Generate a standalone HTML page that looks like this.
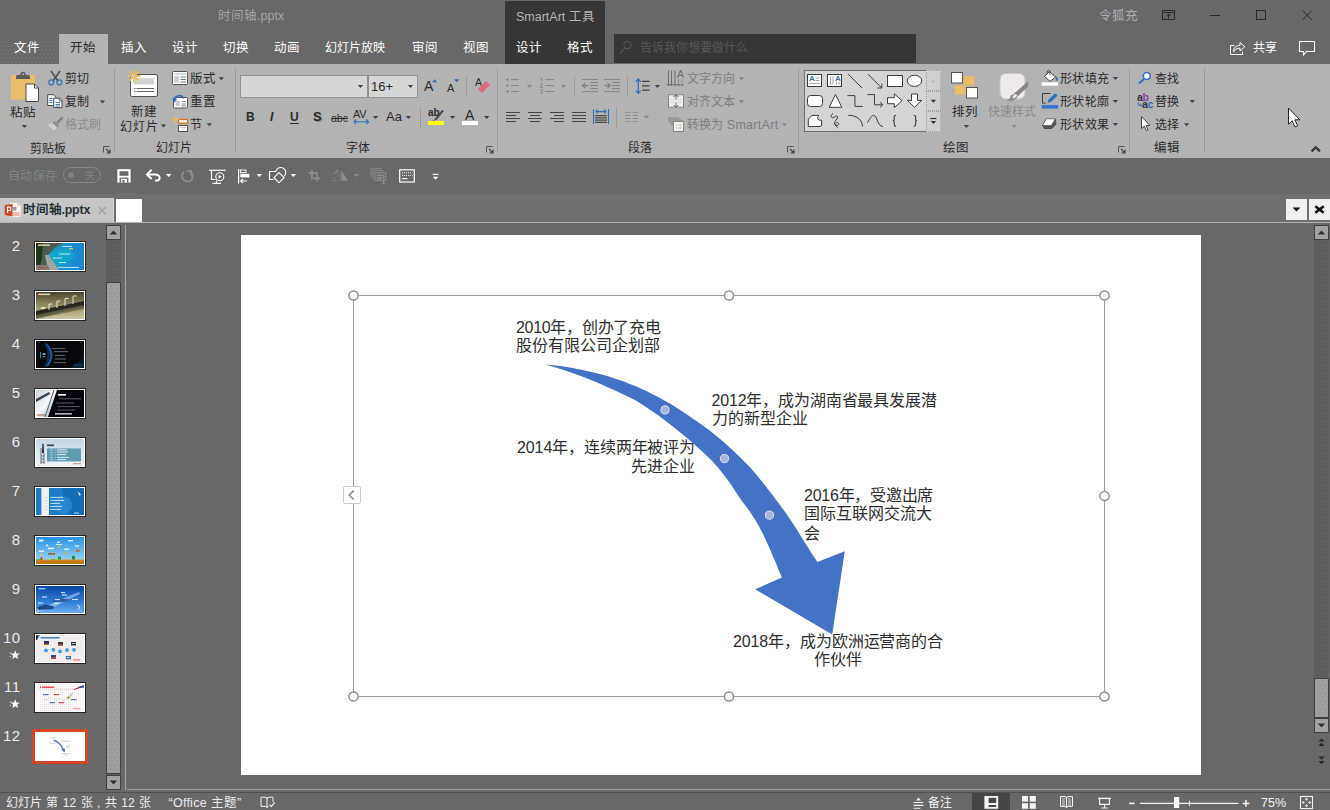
<!DOCTYPE html>
<html lang="zh-CN">
<head>
<meta charset="utf-8">
<title>时间轴.pptx</title>
<style>
*{box-sizing:border-box;margin:0;padding:0}
html,body{width:1330px;height:810px;overflow:hidden;background:#686868}
body{font-family:"Liberation Sans",sans-serif;font-size:12px;color:#fff;position:relative}
#app{position:absolute;left:0;top:0;width:1330px;height:810px;overflow:hidden;background:#686868}
.a{position:absolute}
.t{position:absolute;white-space:nowrap;line-height:16px;height:16px;font-size:12px}
.w{color:#fff}
.k{color:#2b2b2b}
.g{color:#8c8c8c}
svg.L{position:absolute;left:0;top:0;width:1330px;height:810px;overflow:hidden;pointer-events:none}
.st{position:absolute;white-space:nowrap;font-size:16px;line-height:19px;height:19px;color:#2e2e2e;text-align:justify;text-align-last:justify}
.sep{position:absolute;width:1px;background:#9c9c9c}
</style>
</head>
<body>
<div id="app">
<!-- ===== title bar + tab row ===== -->
<div class="a" id="titlebar" style="left:0;top:0;width:1330px;height:64px;background:#686868"></div>
<div class="t" style="width:66.11px;text-align:justify;text-align-last:justify;left:218px;top:8px;color:#a6a6a6;font-size:12.5px">时间轴.pptx</div>
<div class="a" id="ctxtab" style="left:505px;top:1px;width:100px;height:63px;background:#363636"></div>
<div class="t" style="width:78.80px;text-align:justify;text-align-last:justify;left:516px;top:9px;color:#b4b4b4;font-size:12.5px">SmartArt 工具</div>
<div class="t" style="width:39.00px;text-align:justify;text-align-last:justify;left:1099px;top:7.5px;color:#b0b0b0;font-size:12.5px">令狐充</div>
<div class="a" id="filetab" style="left:2px;top:42px;width:56px;height:22px;background-image:radial-gradient(circle,#7f7f7f 0.45px,transparent 0.85px),radial-gradient(circle,#7f7f7f 0.45px,transparent 0.85px);background-size:4px 8px;background-position:0 0,2px 4px"></div>
<div class="a" id="hometab" style="left:59px;top:34px;width:49px;height:30px;background:#b3b3b3"></div>
<div class="t w" style="width:26.00px;text-align:justify;text-align-last:justify;left:14px;top:40px;font-size:12.5px">文件</div>
<div class="t k" style="width:26.00px;text-align:justify;text-align-last:justify;left:70px;top:40px;font-size:12.5px">开始</div>
<div class="t w" style="width:26.00px;text-align:justify;text-align-last:justify;left:121px;top:40px;font-size:12.5px">插入</div>
<div class="t w" style="width:26.00px;text-align:justify;text-align-last:justify;left:172px;top:40px;font-size:12.5px">设计</div>
<div class="t w" style="width:26.00px;text-align:justify;text-align-last:justify;left:223px;top:40px;font-size:12.5px">切换</div>
<div class="t w" style="width:26.00px;text-align:justify;text-align-last:justify;left:274px;top:40px;font-size:12.5px">动画</div>
<div class="t w" style="width:60.00px;text-align:justify;text-align-last:justify;left:325px;top:40px">幻灯片放映</div>
<div class="t w" style="width:26.00px;text-align:justify;text-align-last:justify;left:412px;top:40px;font-size:12.5px">审阅</div>
<div class="t w" style="width:26.00px;text-align:justify;text-align-last:justify;left:463px;top:40px;font-size:12.5px">视图</div>
<div class="t w" style="width:26.00px;text-align:justify;text-align-last:justify;left:516px;top:40px;font-size:12.5px">设计</div>
<div class="t w" style="width:26.00px;text-align:justify;text-align-last:justify;left:567px;top:40px;font-size:12.5px">格式</div>
<div class="a" id="search" style="left:614px;top:34px;width:302px;height:29px;background:#363636"></div>
<div class="t" style="width:108.00px;text-align:justify;text-align-last:justify;left:640px;top:40px;color:#585858">告诉我你想要做什么</div>
<div class="t w" style="width:24.00px;text-align:justify;text-align-last:justify;left:1253px;top:40px">共享</div>
<svg class="L" viewBox="0 0 1330 810" fill="none">
 <!-- search magnifier -->
 <circle cx="627.5" cy="45" r="3.6" stroke="#4e5a4e" stroke-width="1.1"/>
 <path d="M625 48 L620 53.5" stroke="#4e5a4e" stroke-width="1.2"/>
 <!-- ribbon display options -->
 <rect x="1162.5" y="10.5" width="12" height="9" stroke="#2a2a2a" stroke-width="1"/>
 <path d="M1162.5 12.5 H1174.5" stroke="#2a2a2a" stroke-width="1"/>
 <path d="M1168.5 18.5 V14.2 M1166.3 16.2 L1168.5 14 L1170.7 16.2" stroke="#2a2a2a" stroke-width="1"/>
 <!-- min / max / close -->
 <path d="M1210 15.5 H1220" stroke="#2a2a2a" stroke-width="1"/>
 <rect x="1256.5" y="10.5" width="9" height="9" stroke="#2a2a2a" stroke-width="1"/>
 <path d="M1302.5 10.5 L1312 20 M1312 10.5 L1302.5 20" stroke="#2a2a2a" stroke-width="1"/>
 <!-- share -->
 <path d="M1234.5 45.5 H1230.5 V54.5 H1242.5 V51.5" stroke="#fff" stroke-width="1"/>
 <path d="M1233.5 52 C1233.5 47.5 1236 45.5 1240 45.5 V42.5 L1244.8 46.8 L1240 51 V48.2 C1237 48.2 1235 49 1233.5 52 Z" stroke="#fff" stroke-width="1" stroke-linejoin="round"/>
 <!-- comment -->
 <path d="M1299.5 41.5 H1314.5 V51.5 H1306.5 L1303.5 54.8 V51.5 H1299.5 Z" stroke="#fff" stroke-width="1.1" stroke-linejoin="miter"/>
</svg>
<!-- ===== ribbon background ===== -->
<div class="a" id="ribbon" style="left:0;top:64px;width:1330px;height:94px;background:#b3b3b3"></div>
<!-- group: clipboard -->
<div class="t k" style="width:26.00px;text-align:justify;text-align-last:justify;left:10px;top:104.5px;font-size:12.5px">粘贴</div>
<div class="t k" style="width:24.00px;text-align:justify;text-align-last:justify;left:65px;top:71px">剪切</div>
<div class="t k" style="width:24.00px;text-align:justify;text-align-last:justify;left:65px;top:94px">复制</div>
<div class="t g" style="width:36.00px;text-align:justify;text-align-last:justify;left:65px;top:117px">格式刷</div>
<div class="t k" style="width:36.00px;text-align:justify;text-align-last:justify;left:30px;top:140.5px">剪贴板</div>
<div class="sep" style="left:114px;top:68px;height:85px"></div>
<!-- group: slides -->
<div class="t k" style="width:26.00px;text-align:justify;text-align-last:justify;left:131px;top:104px;font-size:12.5px">新建</div>
<div class="t k" style="width:38.41px;text-align:justify;text-align-last:justify;left:120px;top:119px;letter-spacing:.8px">幻灯片</div>
<div class="t k" style="width:26.00px;text-align:justify;text-align-last:justify;left:190px;top:71px;font-size:12.5px">版式</div>
<div class="t k" style="width:26.00px;text-align:justify;text-align-last:justify;left:190px;top:94px;font-size:12.5px">重置</div>
<div class="t k" style="left:190px;top:117px">节</div>
<div class="t k" style="width:36.00px;text-align:justify;text-align-last:justify;left:156px;top:140px">幻灯片</div>
<div class="sep" style="left:235px;top:68px;height:85px"></div>
<svg class="L" viewBox="0 0 1330 810" fill="none">
 <!-- paste -->
 <rect x="11" y="75" width="24" height="24.5" fill="#e6be6c"/>
 <path d="M16 79 V76.5 Q16 75 17.5 75 H20.3 Q20.3 71.8 23 71.8 Q25.7 71.8 25.7 75 H28.5 Q30 75 30 76.5 V79 Z" fill="#5a5a5a"/>
 <circle cx="23" cy="74.3" r="1" fill="#b3b3b3"/>
 <path d="M26 84 H34.5 L38.5 88 V101.5 H26 Z" fill="#fff" stroke="#4a4a4a" stroke-width="1"/>
 <path d="M34.5 84 V88 H38.5" stroke="#4a4a4a" stroke-width="1"/>
 <path d="M21.8 125 H27.2 L24.5 128 Z" fill="#444"/>
 <!-- scissors -->
 <path d="M51 71 L58.2 81.2 M60 71 L52.8 81.2" stroke="#505050" stroke-width="1.5"/>
 <circle cx="51.3" cy="82.3" r="2.5" stroke="#2f6fb6" stroke-width="1.2"/>
 <circle cx="59.3" cy="82.3" r="2.5" stroke="#2f6fb6" stroke-width="1.2"/>
 <!-- copy -->
 <path d="M47.7 94.7 H53.5 L56 97.2 V105.5 H47.7 Z" fill="#fff" stroke="#4a4a4a" stroke-width="1"/>
 <path d="M49.5 98.5 H52.5 M49.5 100.5 H52.5 M49.5 102.5 H52.5" stroke="#2f6fb6" stroke-width="1"/>
 <path d="M53.7 98.2 H59.5 L62 100.7 V107.6 H53.7 Z" fill="#fff" stroke="#4a4a4a" stroke-width="1"/>
 <path d="M59.3 98.2 V101 H62" stroke="#4a4a4a" stroke-width="0.8"/>
 <path d="M55.5 102.5 H60 M55.5 104.5 H60 M55.5 106 H60" stroke="#2f6fb6" stroke-width="0.9"/>
 <path d="M99.8 100.5 H105.2 L102.5 103.5 Z" fill="#444"/>
 <!-- format painter (disabled) -->
 <path d="M62.5 117.5 L57 123" stroke="#858585" stroke-width="2.6"/>
 <path d="M54.5 121 L59.5 126 L57.5 128 L52.5 123 Z" fill="#8e8e8e"/>
 <path d="M52.5 123 L57.5 128 L54 130.5 L47.5 125 Z" fill="#d0d0d0"/>
 <!-- launcher -->
 <path d="M103.5 152.5 V146.5 H109.5" stroke="#555" stroke-width="1"/>
 <path d="M106 149 L109.5 152.5 M110 149.5 V153 H106.5" stroke="#444" stroke-width="1.2"/>
 <!-- new slide -->
 <rect x="130.5" y="74.5" width="27" height="22" rx="1.5" fill="#fff" stroke="#555" stroke-width="1"/>
 <rect x="134" y="78" width="20" height="6.5" fill="#d2d2d2"/>
 <path d="M136.5 88.5 H154 M136.5 91.5 H154 M134 88.5 H135.3 M134 91.5 H135.3" stroke="#666" stroke-width="1"/>
 <g stroke="#e8bf62" stroke-width="1.8"><path d="M134 69.6 V82.4 M127.6 76 H140.4 M129.5 71.5 L138.5 80.5 M138.5 71.5 L129.5 80.5"/></g>
 <circle cx="134" cy="76" r="1.6" fill="#c8c8c8"/>
 <path d="M160.8 124.5 H166.2 L163.5 127.5 Z" fill="#444"/>
 <!-- layout -->
 <rect x="172.5" y="71.5" width="15" height="13" rx="1" fill="#fff" stroke="#555" stroke-width="1"/>
 <path d="M174 74 H186" stroke="#ccc" stroke-width="1.4"/>
 <rect x="174.3" y="76" width="4.6" height="6.6" fill="#ccc"/>
 <path d="M180.5 77 H185.8 M180.5 79.5 H185.8 M180.5 82 H185.8" stroke="#666" stroke-width="0.9"/>
 <path d="M218.6 77.3 H224 L221.3 80.3 Z" fill="#444"/>
 <!-- reset -->
 <rect x="173.5" y="97.5" width="14" height="10.5" rx="1" fill="#fff" stroke="#555" stroke-width="1"/>
 <rect x="175.5" y="100.5" width="4.5" height="5.5" fill="#ccc"/>
 <path d="M181.5 101.5 H186 M181.5 104 H186 M181.5 106 H186" stroke="#777" stroke-width="0.9"/>
 <path d="M174.5 100.5 C174.5 95 182 94 183.5 98.5" stroke="#2f6fb6" stroke-width="1.6"/>
 <path d="M172 98.3 L177.2 98.8 L174.3 102.8 Z" fill="#2f6fb6"/>
 <!-- section -->
 <rect x="178.5" y="119.5" width="9" height="3.6" fill="#fff" stroke="#e0701c" stroke-width="1.2"/>
 <rect x="178.5" y="125.5" width="9" height="6" fill="#fff" stroke="#555" stroke-width="1"/>
 <path d="M180 127.5 H186" stroke="#ccc" stroke-width="1.2"/>
 <g stroke="#e8bf62" stroke-width="0.9"><path d="M175.5 116 V123 M172 119.5 H179 M173 117 L178 122 M178 117 L173 122"/></g>
 <path d="M206.7 123.3 H212.1 L209.4 126.3 Z" fill="#444"/>
</svg>
<!-- group: font -->
<div class="a" style="left:240px;top:75px;width:128px;height:23px;background:#d6d6d6;border:1px solid #8a958a"></div>
<div class="a" style="left:368px;top:75px;width:50px;height:23px;background:#d6d6d6;border:1px solid #8a958a"></div>
<div class="t k" style="left:371px;top:79px;font-size:13px">16+</div>
<div class="t k" style="left:424px;top:78px;font-size:14px">A</div>
<div class="t k" style="left:447px;top:80px;font-size:11px">A</div>
<div class="sep" style="left:466px;top:76px;height:21px"></div>
<div class="t k" style="left:475px;top:74px;font-size:10.5px">A</div>
<div class="t k" style="left:246px;top:109px;font-weight:bold">B</div>
<div class="t k" style="left:270px;top:109px;font-weight:bold;font-style:italic">I</div>
<div class="t k" style="left:290px;top:109px;font-weight:bold;text-decoration:underline;text-underline-offset:1.5px">U</div>
<div class="t" style="left:314px;top:110px;font-weight:bold;color:#8d8d8d;font-size:13px">S</div>
<div class="t k" style="left:313px;top:109px;font-weight:bold;font-size:13px">S</div>
<div class="t k" style="left:331px;top:110px;font-size:10.5px;text-decoration:line-through">abc</div>
<div class="t k" style="left:353px;top:106px;font-size:11px;letter-spacing:-.3px">AV</div>
<div class="t k" style="left:386px;top:109px;font-size:13px">Aa</div>
<div class="sep" style="left:420px;top:107px;height:21px"></div>
<div class="t k" style="left:428px;top:105px;font-size:10px;font-weight:bold">ab</div>
<div class="t k" style="left:465px;top:107px;font-size:14px">A</div>
<div class="t k" style="width:24.00px;text-align:justify;text-align-last:justify;left:346px;top:140px">字体</div>
<div class="sep" style="left:497px;top:68px;height:85px"></div>
<svg class="L" viewBox="0 0 1330 810" fill="none">
 <path d="M357.8 85 H363.2 L360.5 88 Z" fill="#444"/>
 <path d="M407.8 85 H413.2 L410.5 88 Z" fill="#444"/>
 <path d="M432 82.3 H437.4 L434.7 79.3 Z" fill="#2f6fb6"/>
 <path d="M454 79.3 H459.4 L456.7 82.3 Z" fill="#2f6fb6"/>
 <!-- eraser -->
 <path d="M478 89 L486 81 L490 85 L482 93 Z" fill="#da6b7e"/>
 <path d="M477.3 89.8 L481.2 93.8" stroke="#b3b3b3" stroke-width="1"/>
 <!-- AV arrow -->
 <path d="M354 121.8 H368.5" stroke="#2f6fb6" stroke-width="1.1"/>
 <path d="M356.3 119.5 L354 121.8 L356.3 124.1 M366.2 119.5 L368.5 121.8 L366.2 124.1" stroke="#2f6fb6" stroke-width="1.1"/>
 <path d="M372.8 116 H378.2 L375.5 119 Z" fill="#444"/>
 <path d="M405.7 116 H411.1 L408.4 119 Z" fill="#444"/>
 <!-- highlighter -->
 <rect x="428" y="121" width="16" height="4" fill="#ffff00"/>
 <path d="M443 110.5 L435.5 119.5" stroke="#4a4a4a" stroke-width="2"/>
 <path d="M436 118.5 L433 121" stroke="#4a4a4a" stroke-width="1"/>
 <path d="M449.8 116 H455.2 L452.5 119 Z" fill="#444"/>
 <!-- font color -->
 <rect x="462" y="121" width="16" height="4" fill="#fff"/>
 <path d="M484 116 H489.4 L486.7 119 Z" fill="#444"/>
 <!-- launcher -->
 <path d="M486.5 152.5 V146.5 H492.5" stroke="#555" stroke-width="1"/>
 <path d="M489 149 L492.5 152.5 M493 149.5 V153 H489.5" stroke="#444" stroke-width="1.2"/>
</svg>
<!-- group: paragraph -->
<div class="sep" style="left:574px;top:76px;height:21px"></div>
<div class="sep" style="left:627px;top:76px;height:21px"></div>
<div class="sep" style="left:616px;top:107px;height:21px"></div>
<div class="t g" style="width:48.00px;text-align:justify;text-align-last:justify;left:687px;top:71px;color:#7e7e7e">文字方向</div>
<div class="t g" style="width:48.00px;text-align:justify;text-align-last:justify;left:687px;top:94px;color:#7e7e7e">对齐文本</div>
<div class="t g" style="width:91.48px;text-align:justify;text-align-last:justify;left:687px;top:117px;color:#7e7e7e">转换为<span style="font-size:12.5px;letter-spacing:.3px"> SmartArt</span></div>
<div class="t g" style="left:677px;top:66px;color:#6c6c6c;font-size:10.5px">A</div>
<div class="t k" style="width:24.00px;text-align:justify;text-align-last:justify;left:628px;top:140px">段落</div>
<div class="sep" style="left:798px;top:68px;height:85px"></div>
<svg class="L" viewBox="0 0 1330 810" fill="none">
 <!-- bullets (disabled) -->
 <g fill="#838383"><circle cx="507.5" cy="79.6" r="1.2"/><circle cx="507.5" cy="85.6" r="1.2"/><circle cx="507.5" cy="91.5" r="1.2"/></g>
 <path d="M511 79.6 H519 M511 85.6 H519 M511 91.5 H519" stroke="#838383" stroke-width="1"/>
 <path d="M526.8 85 H532.2 L529.5 88 Z" fill="#8a8a8a"/>
 <!-- numbering (disabled) -->
 <path d="M545.2 79.6 H554 M545.2 85.6 H554 M545.2 91.5 H554" stroke="#838383" stroke-width="1"/>
 <g stroke="#838383" stroke-width="0.9"><path d="M540.6 78.6 L541.6 77.8 V81.6 M540.4 84 Q542.6 83 542.4 84.8 L540.4 87.4 H542.8 M540.4 89.8 H542.4 L541.3 91.2 Q543 91.6 542.4 93 Q541.6 93.8 540.2 93.2"/></g>
 <path d="M560.8 85 H566.2 L563.5 88 Z" fill="#8a8a8a"/>
 <!-- indent less / more (disabled) -->
 <g stroke="#838383" stroke-width="1"><path d="M582 79.4 H598 M590 82.5 H598 M590 85.6 H598 M590 88.6 H598 M582 91.7 H598"/><path d="M582.6 85.6 H588.6 M585.4 83 L582.6 85.6 L585.4 88.2" stroke-width="1.3"/></g>
 <g stroke="#838383" stroke-width="1"><path d="M604 79.4 H620 M612 82.5 H620 M612 85.6 H620 M612 88.6 H620 M604 91.7 H620"/><path d="M604.2 85.6 H610.2 M607.4 83 L610.2 85.6 L607.4 88.2" stroke-width="1.3"/></g>
 <!-- line spacing -->
 <path d="M638.3 79.2 V93.2 M635.8 81.8 L638.3 79 L640.8 81.8 M635.8 90.6 L638.3 93.4 L640.8 90.6" stroke="#2f6fb6" stroke-width="1.2"/>
 <path d="M642 81.4 H649.5 M642 85.8 H649.5 M642 90.2 H649.5" stroke="#3f3f3f" stroke-width="1.2"/>
 <path d="M654.7 85 H660.1 L657.4 88 Z" fill="#444"/>
 <!-- alignment -->
 <g stroke="#454545" stroke-width="1">
  <path d="M506 112.5 H520 M506 115.5 H516 M506 118.5 H520 M506 121.5 H516"/>
  <path d="M528 112.5 H542 M530 115.5 H540 M528 118.5 H542 M530 121.5 H540"/>
  <path d="M550 112.5 H564 M554 115.5 H564 M550 118.5 H564 M554 121.5 H564"/>
  <path d="M572 112.5 H586 M572 115.5 H586 M572 118.5 H586 M572 121.5 H586"/>
  <path d="M595 115.7 H607 M595 117.9 H607 M595 120.1 H607 M595 122.3 H607" stroke="#333"/>
 </g>
 <path d="M593.5 109 V124 M608.5 109 V124" stroke="#2f6fb6" stroke-width="1.1"/>
 <path d="M596 111.6 H606 M598 109.6 L596 111.6 L598 113.6 M604 109.6 L606 111.6 L604 113.6" stroke="#2f6fb6" stroke-width="1.1"/>
 <!-- columns (disabled) -->
 <path d="M625 112.5 H630.5 M632.5 112.5 H638 M625 115.5 H630.5 M632.5 115.5 H638 M625 118.5 H630.5 M632.5 118.5 H638 M625 121.5 H630.5 M632.5 121.5 H638" stroke="#8a918a" stroke-width="1"/>
 <path d="M643.7 115.8 H649.1 L646.4 118.8 Z" fill="#8a8a8a"/>
 <!-- text direction (disabled) -->
 <g stroke="#6e6e6e" stroke-width="1"><path d="M668.5 70.5 V85 M671.5 70.5 V85 M675 70.5 V85"/><path d="M678.5 79.5 V85 M682 79.5 V85" stroke-dasharray="1.2 1"/>
 <path d="M667.2 84 L668.5 86 L669.8 84 M670.2 84 L671.5 86 L672.8 84 M673.7 84 L675 86 L676.3 84 M677.2 84 L678.5 86 L679.8 84 M680.7 84 L682 86 L683.3 84" stroke-width="0.9"/></g>
 <path d="M738.8 77.3 H744.2 L741.5 80.3 Z" fill="#858585"/>
 <!-- align text (disabled) -->
 <rect x="668.5" y="94.7" width="15" height="12.6" fill="#f1ecec" stroke="#7e887e" stroke-width="1"/>
 <rect x="673.4" y="93.6" width="5.2" height="2.2" fill="#b3b3b3"/><rect x="673.4" y="106.2" width="5.2" height="2.2" fill="#b3b3b3"/>
 <path d="M676 94.6 V99.4 M673.6 97 L676 94.4 L678.4 97 M676 102.6 V107.4 M673.6 105 L676 107.6 L678.4 105" stroke="#747e74" stroke-width="1.1"/>
 <path d="M670.4 99.6 H681.6 M670.4 102.4 H681.6" stroke="#bdbdbd" stroke-width=".9" stroke-dasharray="1.2 1.2"/>
 <path d="M738.8 100.3 H744.2 L741.5 103.3 Z" fill="#808080"/>
 <!-- convert to smartart (disabled) -->
 <path d="M668 117 H678 L683 121 L680 125 H671 L668 121 Z" fill="#999"/>
 <rect x="673.5" y="121.5" width="10" height="10" fill="#f4f0f0" stroke="#7e887e" stroke-width="1"/>
 <path d="M676 125 H677.2 M678.6 125 H681.4 M676 128 H677.2 M678.6 128 H681.4" stroke="#aaa" stroke-width="1"/>
 <path d="M781.7 123.3 H787.1 L784.4 126.3 Z" fill="#858585"/>
 <!-- launcher -->
 <path d="M787.5 152.5 V146.5 H793.5" stroke="#555" stroke-width="1"/>
 <path d="M790 149 L793.5 152.5 M794 149.5 V153 H790.5" stroke="#444" stroke-width="1.2"/>
</svg>
<!-- group: drawing -->
<div class="a" style="left:804px;top:70px;width:137px;height:62px;background:#d0d0d0"></div>
<div class="a" style="left:804px;top:70px;width:123px;height:62px;background:#d4d4d4;border:1px solid #707070"></div>
<div class="a" style="left:926px;top:70px;width:15px;height:21px;background:#d0d0d0;border:1px dotted #98a498"></div>
<div class="a" style="left:926px;top:91px;width:15px;height:20px;background:#d0d0d0;border:1px dotted #98a498"></div>
<div class="a" style="left:926px;top:111px;width:15px;height:21px;background:#d0d0d0;border:1px dotted #98a498"></div>
<div class="t k" style="width:26.00px;text-align:justify;text-align-last:justify;left:952px;top:104px;font-size:12.5px">排列</div>
<div class="t g" style="width:48.00px;text-align:justify;text-align-last:justify;left:988px;top:104px;color:#8a8a8a">快速样式</div>
<div class="t k" style="width:49.61px;text-align:justify;text-align-last:justify;left:1060px;top:71px;letter-spacing:.4px">形状填充</div>
<div class="t k" style="width:49.61px;text-align:justify;text-align-last:justify;left:1060px;top:94px;letter-spacing:.4px">形状轮廓</div>
<div class="t k" style="width:49.61px;text-align:justify;text-align-last:justify;left:1060px;top:117px;letter-spacing:.4px">形状效果</div>
<div class="t k" style="width:26.00px;text-align:justify;text-align-last:justify;left:943px;top:140px;font-size:12.5px">绘图</div>
<div class="sep" style="left:1129px;top:68px;height:85px"></div>
<svg class="L" viewBox="0 0 1330 810" fill="none">
 <g stroke="#3c3c3c" stroke-width="1">
 <!-- row 1 -->
 <rect x="807.5" y="74.5" width="14" height="12" fill="#fff"/>
 <path d="M815.5 78 H819.5 M815.5 80.5 H819.5 M809.5 83.5 H819.5" stroke="#999" stroke-width="0.9"/>
 <rect x="827.5" y="74.5" width="14" height="12" fill="#fff"/>
 <path d="M830.5 76.5 V84.5 M833 76.5 V84.5 M836.5 82 V84.5 M839 82 V84.5" stroke="#999" stroke-width="0.9"/>
 <path d="M848.3 74.2 L862 88"/>
 <path d="M868 74.2 L881.6 87.8 M881.8 83.6 V88 H877.4"/>
 <rect x="887.5" y="75.5" width="15" height="11" fill="#fff"/>
 <ellipse cx="914.5" cy="80.8" rx="7.2" ry="5.6" fill="#fff"/>
 <!-- row 2 -->
 <rect x="807.5" y="95.5" width="15" height="11" rx="3" fill="#fff"/>
 <path d="M835.5 94.6 L841.8 107.3 H829.2 Z" fill="#fff"/>
 <path d="M847.4 95.6 H854.9 V106.4 H862.9"/>
 <path d="M867.4 94.6 H874.5 V104.8 H882.6 M880 102.2 L882.8 104.8 L880 107.4"/>
 <path d="M887.5 97.7 H894.3 V93.8 L902 100.7 L894.3 107.6 V103.7 H887.5 Z" fill="#fff"/>
 <path d="M911.5 94 H917.5 V100.4 H921.6 L914.5 107.3 L907.4 100.4 H911.5 Z" fill="#fff"/>
 <!-- row 3 -->
 <path d="M808.3 126.5 V119 L812 115.4 H818.6 Q815.6 120.4 821.6 120.4 V125 Q821.6 126.5 820 126.5 Z" fill="#fff"/>
 <path d="M833 113.4 C829 116.5 832 119 834.5 117 C837.5 114.6 838.8 117 836 120.2 C833 123.6 834.6 126.4 837.2 125.6 C840 124.6 838.4 121.6 836.4 122.8 C834.8 124 835.8 126.2 837.6 127.6" />
 <path d="M848.3 115.4 C856 115.2 862 119 862.6 126.6"/>
 <path d="M867.4 122.8 C870 118.5 871.5 115.4 873.5 115.4 C877.5 115.4 877 126.4 882.9 126.4"/>
 <path d="M896 115.2 Q894.2 115.2 894.2 117 V119.4 Q894.2 120.8 892.8 120.8 Q894.2 120.8 894.2 122.2 V124.6 Q894.2 126.4 896 126.4" stroke-width="1.1"/>
 <path d="M913.8 115.2 Q915.6 115.2 915.6 117 V119.4 Q915.6 120.8 917 120.8 Q915.6 120.8 915.6 122.2 V124.6 Q915.6 126.4 913.8 126.4" stroke-width="1.1"/>
 </g>
 <!-- gallery scroll arrows -->
 <path d="M930.7 82.4 H936.1 L933.4 79.4 Z" fill="#bdbdbd"/>
 <path d="M930.7 99.8 H936.1 L933.4 102.8 Z" fill="#333"/>
 <path d="M930.4 118.5 H936.4" stroke="#333" stroke-width="1.2"/>
 <path d="M930.7 121 H936.1 L933.4 124 Z" fill="#333"/>
 <!-- arrange -->
 <rect x="963.3" y="76.2" width="11" height="9.3" fill="#e6be6c"/>
 <rect x="955" y="85.4" width="11.4" height="9.3" fill="#e6be6c"/>
 <rect x="951.5" y="72.5" width="11" height="10.5" fill="#fff" stroke="#555" stroke-width="1"/>
 <rect x="966.5" y="87.5" width="11" height="10.5" fill="#fff" stroke="#555" stroke-width="1"/>
 <path d="M963.7 125 H969.1 L966.4 128 Z" fill="#444"/>
 <!-- quick styles (disabled) -->
 <rect x="1000" y="73.5" width="25" height="25.5" rx="6" fill="#f1eaea" stroke="#c6c6c6" stroke-width="1"/>
 <path d="M1028.5 81 L1028 86.5 L1017 97 L1013.5 94 Z" fill="#868686"/>
 <path d="M1014 94 L1017.5 97.5 L1012 101.5 L1006.5 100 Q1011 98.5 1010.5 95.5 Z" fill="#858d85"/>
 <ellipse cx="1014.8" cy="96.2" rx="2.7" ry="1.5" transform="rotate(-42 1014.8 96.2)" fill="#e8e8e8"/>
 <path d="M1011.6 125 H1017 L1014.3 128 Z" fill="#8a8a8a"/>
 <!-- shape fill -->
 <rect x="1041.7" y="82.3" width="16.5" height="3.4" fill="#fff"/>
 <path d="M1049.5 71.5 L1055.8 77 L1050 81.4 L1044.5 76.3 Z" fill="#fff" stroke="#3f3f3f" stroke-width="1"/>
 <path d="M1047.3 73.8 V71 Q1048.6 69.4 1049.8 71 V75" stroke="#3f3f3f" stroke-width="0.9"/>
 <path d="M1056 76.2 Q1058.8 78.4 1057.2 81.4 Q1055 79.6 1056 76.2 Z" fill="#2f6fb6"/>
 <path d="M1112.7 77 H1118.1 L1115.4 80 Z" fill="#444"/>
 <!-- shape outline -->
 <rect x="1041.7" y="105.1" width="16.5" height="3.5" fill="#3a6fd0"/>
 <path d="M1050.5 93.5 H1042.5 V103.2 H1045.5" stroke="#3f3f3f" stroke-width="1"/>
 <path d="M1047.6 102.8 L1048.6 99.6 L1055 93.4 Q1057.4 93.6 1057.2 96 L1050.8 102 Z" fill="#2f6fb6"/>
 <path d="M1112.7 100 H1118.1 L1115.4 103 Z" fill="#444"/>
 <!-- shape effects -->
 <path d="M1046 119 H1056 L1056.4 124.6 L1051.6 129 H1044 L1042.3 125.6 Z" fill="#555"/>
 <path d="M1046.2 118.8 H1055.4 L1051.4 125.6 H1042.4 Z" fill="#fff" stroke="#555" stroke-width="0.8"/>
 <path d="M1112.7 123 H1118.1 L1115.4 126 Z" fill="#444"/>
 <!-- launcher -->
 <path d="M1118.5 152.5 V146.5 H1124.5" stroke="#555" stroke-width="1"/>
 <path d="M1121 149 L1124.5 152.5 M1125 149.5 V153 H1121.5" stroke="#444" stroke-width="1.2"/>
</svg>
<div class="t" style="left:809px;top:71px;font-size:8px;font-weight:bold;color:#2f6fb6">A</div>
<div class="t" style="left:835px;top:71px;font-size:8px;font-weight:bold;color:#2f6fb6">A</div>
<!-- group: editing -->
<div class="t k" style="width:24.00px;text-align:justify;text-align-last:justify;left:1155px;top:71px">查找</div>
<div class="t k" style="width:24.00px;text-align:justify;text-align-last:justify;left:1155px;top:94px">替换</div>
<div class="t k" style="width:24.00px;text-align:justify;text-align-last:justify;left:1155px;top:117px">选择</div>
<div class="t k" style="width:26.00px;text-align:justify;text-align-last:justify;left:1154px;top:140px;font-size:12.5px">编辑</div>
<div class="sep" style="left:1204px;top:68px;height:85px"></div>
<div class="t k" style="left:1137px;top:89px;font-size:10.5px;font-weight:bold;letter-spacing:-.3px;color:#333">a<span style="color:#8a3fa8">b</span></div>
<div class="t k" style="left:1142px;top:96px;font-size:10.5px;font-weight:bold;letter-spacing:-.3px;color:#333">a<span style="color:#2f6fb6">c</span></div>
<svg class="L" viewBox="0 0 1330 810" fill="none">
 <circle cx="1146.8" cy="76" r="3.5" fill="#fff" stroke="#2f6fb6" stroke-width="1.6"/>
 <path d="M1144 79 L1138.8 83.4" stroke="#2f6fb6" stroke-width="2"/>
 <path d="M1138.3 102.6 V105.2 H1141.6 M1140.2 103.8 L1141.8 105.2 L1140.2 106.6" stroke="#2f6fb6" stroke-width="1"/>
 <path d="M1189.6 100 H1195 L1192.3 103 Z" fill="#444"/>
 <path d="M1141.5 116.6 V128.6 L1144.2 126 L1146.3 130.6 L1148 129.8 L1146 125.4 H1149.8 Z" fill="#fff" stroke="#333" stroke-width="0.9" stroke-linejoin="round"/>
 <path d="M1183.9 123.3 H1189.3 L1186.6 126.3 Z" fill="#444"/>
 <path d="M1311.6 151.4 L1315.8 147.2 L1320 151.4" stroke="#333" stroke-width="2.2"/>
 <!-- mouse pointer -->
 <path d="M1288.5 108 V124.2 L1292.2 120.8 L1295 127 L1297.6 125.8 L1294.8 119.8 H1299.8 Z" fill="#fff" stroke="#222" stroke-width="1" stroke-linejoin="round"/>
</svg>
<!-- ===== quick access toolbar ===== -->
<div class="a" id="qat" style="left:0;top:158px;width:1330px;height:36px;background:#686868"></div>
<div class="t" style="width:50.41px;text-align:justify;text-align-last:justify;left:7.5px;top:168px;color:#7e877e;letter-spacing:.6px">自动保存</div>
<div class="a" style="left:63px;top:167px;width:38px;height:16px;border:1px solid #808a80;border-radius:8px"></div>
<div class="t" style="left:85px;top:168px;color:#7e877e;font-size:10px">关</div>
<svg class="L" viewBox="0 0 1330 810" fill="none">
 <circle cx="71" cy="175" r="2.8" fill="#7c847c"/>
 <!-- save -->
 <path d="M117.3 169.2 H130.6 V182.6 H117.3 Z" fill="#fff"/>
 <rect x="119.6" y="171.2" width="8.8" height="4.6" fill="#686868"/>
 <rect x="119.6" y="177.6" width="8.8" height="5" fill="#686868"/>
 <rect x="121" y="178.8" width="6" height="3.8" fill="#fff"/>
 <rect x="122.4" y="180" width="2" height="2.6" fill="#686868"/>
 <!-- undo -->
 <path d="M147.6 174.4 H154.8 C161.6 174.4 160.8 181.8 155 180.4" stroke="#fff" stroke-width="2"/>
 <path d="M151.6 169.8 L147 174.4 L151.6 179" stroke="#fff" stroke-width="2"/>
 <path d="M166 174 H171.4 L168.7 177 Z" fill="#fff"/>
 <!-- redo (disabled) -->
 <path d="M184 171.6 C180 176 183 181.6 187.6 181.6 C192.6 181.6 194.4 175.6 190.4 171.4" stroke="#8c8c8c" stroke-width="1.8"/>
 <path d="M186.6 171 H191 V175.4" stroke="#8c8c8c" stroke-width="1.8"/>
 <!-- slideshow from beginning -->
 <path d="M209 170.3 H225.5" stroke="#fff" stroke-width="1.3"/>
 <path d="M211.5 170.5 V179.5 H215.5" stroke="#fff" stroke-width="1.2"/>
 <circle cx="219.8" cy="176.8" r="4" stroke="#fff" stroke-width="1.1"/>
 <path d="M218.6 174.8 L221.8 176.8 L218.6 178.8 Z" fill="#fff"/>
 <path d="M216.5 180.6 V183.2 M212.5 183.4 H221" stroke="#fff" stroke-width="1.1"/>
 <!-- align objects -->
 <path d="M238.6 169 V183.6" stroke="#fff" stroke-width="1.2"/>
 <rect x="240.5" y="170" width="5.5" height="2.6" stroke="#fff" stroke-width="0.9"/>
 <rect x="240.3" y="173.8" width="9" height="3.6" fill="#fff"/>
 <path d="M240.6 181 H247 M243 178.8 L240.6 181 L243 183.2" stroke="#fff" stroke-width="1.1"/>
 <path d="M256.7 174 H262.1 L259.4 177 Z" fill="#fff"/>
 <!-- shapes -->
 <path d="M276 171.5 H269.5 V179.5 H273.4" stroke="#fff" stroke-width="1.1"/>
 <path d="M276 171 A5 5 0 1 1 283.6 176.6" stroke="#fff" stroke-width="1.1"/>
 <path d="M279 172.6 L284 177.7 L279 182.8 L274 177.7 Z" stroke="#fff" stroke-width="1.1"/>
 <path d="M290.7 174 H296.1 L293.4 177 Z" fill="#fff"/>
 <!-- crop-like (disabled) -->
 <path d="M312 169.8 V178.4 H320.4 M308.6 173 H317 V181.6" stroke="#8c8c8c" stroke-width="1.8"/>
 <!-- rotate (disabled) -->
 <path d="M341.4 170 L347.8 180.8 H341.4 Z" fill="#8c8c8c"/>
 <path d="M332 180.8 H339.6 V173.4 Z" stroke="#8c8c8c" stroke-width="1" stroke-dasharray="1.4 1"/>
 <path d="M333 174.6 Q334.6 171.2 337.8 171.2 M336.4 169.4 L338.4 171.2 L336.4 173" stroke="#8c8c8c" stroke-width="1"/>
 <path d="M353.7 174 H359.1 L356.4 177 Z" fill="#8c8c8c"/>
 <!-- group (disabled) -->
 <path d="M371 176.6 V168.6 H381.6" stroke="#8a8a8a" stroke-width="1"/>
 <path d="M373 178.6 V170.6 H383.6" stroke="#8a8a8a" stroke-width="1"/>
 <rect x="375" y="172.6" width="10.6" height="8" stroke="#8c8c8c" stroke-width="1"/>
 <rect x="376.8" y="174.4" width="7" height="1.8" fill="#8c8c8c"/>
 <rect x="376.8" y="177" width="4.6" height="2.6" fill="#8c8c8c"/>
 <path d="M383.4 176.6 V183.6 M381.8 177 H385 M381.8 183.6 H385" stroke="#8c8c8c" stroke-width="1"/>
 <!-- touch keyboard -->
 <rect x="399.7" y="169.8" width="14.6" height="12.2" stroke="#fff" stroke-width="1.2"/>
 <path d="M402 172.8 H412.4 M402 175.4 H412.4" stroke="#fff" stroke-width="1" stroke-dasharray="1 1"/>
 <path d="M402 178.6 H407.4" stroke="#fff" stroke-width="1.1"/>
 <!-- customize -->
 <path d="M432.8 174.4 H438.4" stroke="#fff" stroke-width="1.2"/>
 <path d="M432.9 176.8 H438.3 L435.6 179.8 Z" fill="#fff"/>
</svg>
<!-- ===== document tab strip ===== -->
<div class="a" id="docstrip" style="left:0;top:194px;width:1330px;height:28px;background:#6f6f6f;background-image:repeating-conic-gradient(#737373 0 25%,#6b6b6b 0 50%);background-size:2px 2px"></div>
<div class="a" style="left:0;top:222px;width:1330px;height:1px;background:#b4b4b4"></div>
<div class="a" style="left:0;top:223px;width:1330px;height:2px;background:#686868"></div>
<div class="a" style="left:0;top:198px;width:114px;height:24px;background:#c6c6c6;border-right:1px solid #d2d2d2;border-top:1px solid #cdcdcd"></div>
<div class="a" style="left:116px;top:199px;width:26px;height:23px;background:#fff"></div>
<div class="t" style="width:67.27px;text-align:justify;text-align-last:justify;left:23px;top:202px;font-size:12.5px;font-weight:bold;color:#283038;letter-spacing:-.2px">时间轴.pptx</div>
<div class="a" style="left:1286px;top:199px;width:21px;height:21px;background:#f0f0f0"></div>
<div class="a" style="left:1309px;top:199px;width:21px;height:21px;background:#f0f0f0"></div>
<svg class="L" viewBox="0 0 1330 810" fill="none">
 <!-- pptx icon -->
 <path d="M9.5 202.5 H17 L20.8 206.3 V217.3 H9.5 Z" fill="#f6f6f6" stroke="#c9c9c9" stroke-width="0.6"/>
 <path d="M17 202.5 V206.3 H20.8 Z" fill="#ddd"/>
 <rect x="13" y="207" width="3.4" height="3.4" fill="#9a9a9a"/>
 <path d="M13 213 H19.5 M13 215 H19.5" stroke="#e8683e" stroke-width="0.8"/>
 <path d="M4.7 205.2 L12.6 203.8 V216.4 L4.7 215 Z" fill="#d04727"/>
 <path d="M7.6 213 V207.2 H9.4 Q10.9 207.3 10.9 208.9 Q10.9 210.4 9.4 210.5 H7.6" stroke="#fff" stroke-width="1.2"/>
 <!-- tab close -->
 <path d="M98.6 207 L106 214 M106 207 L98.6 214" stroke="#a6a6a6" stroke-width="1.7"/>
 <!-- strip buttons -->
 <path d="M1292.6 207.5 H1300.4 L1296.5 211.6 Z" fill="#111"/>
 <path d="M1315.3 206.2 L1323.7 212.8 M1323.7 206.2 L1315.3 212.8" stroke="#111" stroke-width="2.6"/>
</svg>
<!-- ===== left thumbnail pane ===== -->
<div class="a" id="leftpane" style="left:0;top:225px;width:125px;height:565px;background:#686868"></div>
<div class="a" style="left:125px;top:225px;width:1px;height:565px;background:#a8a8a8"></div>
<div class="a" style="left:106px;top:225px;width:15px;height:565px;background:#5c5c5c;background-image:radial-gradient(circle,#68706a 0.5px,transparent 0.8px),radial-gradient(circle,#68706a 0.5px,transparent 0.8px);background-size:4px 8px;background-position:0 0,2px 4px"></div>
<div class="a" style="left:106px;top:225px;width:15px;height:15px;background:#a2a2a2;border:1px solid #3c423c"></div>
<div class="a" style="left:106px;top:282px;width:15px;height:492px;background:#9c9c9c;border:1px solid #3c423c;background-image:radial-gradient(circle,#b4b4b4 0.5px,transparent 0.8px),radial-gradient(circle,#b4b4b4 0.5px,transparent 0.8px);background-size:4px 8px;background-position:0 0,2px 4px"></div>
<div class="a" style="left:106px;top:775px;width:15px;height:15px;background:#a2a2a2;border:1px solid #3c423c"></div>
<div class="t" style="left:0;width:20.4px;text-align:right;top:237.5px;font-size:15px;letter-spacing:.4px;color:#eaeaea">2</div>
<div class="a" style="left:34px;top:241px;width:52px;height:31px;background:#fff;border:1px solid #262626"></div>
<div class="t" style="left:0;width:20.4px;text-align:right;top:286.5px;font-size:15px;letter-spacing:.4px;color:#eaeaea">3</div>
<div class="a" style="left:34px;top:290px;width:52px;height:31px;background:#fff;border:1px solid #262626"></div>
<div class="t" style="left:0;width:20.4px;text-align:right;top:335.5px;font-size:15px;letter-spacing:.4px;color:#eaeaea">4</div>
<div class="a" style="left:34px;top:339px;width:52px;height:31px;background:#fff;border:1px solid #262626"></div>
<div class="t" style="left:0;width:20.4px;text-align:right;top:384.5px;font-size:15px;letter-spacing:.4px;color:#eaeaea">5</div>
<div class="a" style="left:34px;top:388px;width:52px;height:31px;background:#fff;border:1px solid #262626"></div>
<div class="t" style="left:0;width:20.4px;text-align:right;top:433.5px;font-size:15px;letter-spacing:.4px;color:#eaeaea">6</div>
<div class="a" style="left:34px;top:437px;width:52px;height:31px;background:#fff;border:1px solid #262626"></div>
<div class="t" style="left:0;width:20.4px;text-align:right;top:482.5px;font-size:15px;letter-spacing:.4px;color:#eaeaea">7</div>
<div class="a" style="left:34px;top:486px;width:52px;height:31px;background:#fff;border:1px solid #262626"></div>
<div class="t" style="left:0;width:20.4px;text-align:right;top:531.5px;font-size:15px;letter-spacing:.4px;color:#eaeaea">8</div>
<div class="a" style="left:34px;top:535px;width:52px;height:31px;background:#fff;border:1px solid #262626"></div>
<div class="t" style="left:0;width:20.4px;text-align:right;top:580.5px;font-size:15px;letter-spacing:.4px;color:#eaeaea">9</div>
<div class="a" style="left:34px;top:584px;width:52px;height:31px;background:#fff;border:1px solid #262626"></div>
<div class="t" style="left:0;width:20.4px;text-align:right;top:629.5px;font-size:15px;letter-spacing:.4px;color:#eaeaea">10</div>
<div class="a" style="left:34px;top:633px;width:52px;height:31px;background:#fff;border:1px solid #262626"></div>
<div class="t" style="left:0;width:20.4px;text-align:right;top:678.5px;font-size:15px;letter-spacing:.4px;color:#eaeaea">11</div>
<div class="a" style="left:34px;top:682px;width:52px;height:31px;background:#fff;border:1px solid #262626"></div>
<div class="t" style="left:0;width:20.4px;text-align:right;top:727.5px;font-size:15px;letter-spacing:.4px;color:#eaeaea">12</div>
<div class="a" style="left:32px;top:729px;width:56px;height:35px;background:#fff;border:3px solid #d04727"></div>
<svg class="L" viewBox="0 0 1330 810" fill="none">
 <defs>
  <linearGradient id="g2" x1="0" y1="0" x2="1" y2="0"><stop offset="0" stop-color="#12a4cc"/><stop offset="1" stop-color="#1b86cf"/></linearGradient>
  <linearGradient id="g3" x1="0" y1="0" x2="0" y2="1"><stop offset="0" stop-color="#4a442c"/><stop offset=".45" stop-color="#8e8660"/><stop offset="1" stop-color="#cfc79e"/></linearGradient>
  <linearGradient id="g5" x1="0" y1="0" x2="1" y2="1"><stop offset="0" stop-color="#c9d3de"/><stop offset=".5" stop-color="#f4f7fa"/><stop offset="1" stop-color="#8b97aa"/></linearGradient>
  <linearGradient id="g6" x1="0" y1="0" x2="0" y2="1"><stop offset="0" stop-color="#c3d7e4"/><stop offset="1" stop-color="#eef3f6"/></linearGradient>
  <linearGradient id="g8" x1="0" y1="0" x2="0" y2="1"><stop offset="0" stop-color="#2492e6"/><stop offset="1" stop-color="#a6ddf8"/></linearGradient>
  <linearGradient id="g9" x1="0" y1="0" x2="0" y2="1"><stop offset="0" stop-color="#0a46a6"/><stop offset=".6" stop-color="#2f7fd6"/><stop offset="1" stop-color="#6eaeee"/></linearGradient>
  <pattern id="pd" width="2" height="2" patternUnits="userSpaceOnUse"><rect width="2" height="2" fill="#fff"/><rect width="1" height="1" fill="#f6e3e3"/></pattern>
 </defs>
 <!-- slide 2 -->
 <g transform="translate(36 243)">
  <rect width="48" height="27" fill="url(#g2)"/>
  <path d="M14 10 L30 5 L40 12 L30 21 L18 23 Z" fill="#0fb6cf" opacity=".55"/>
  <path d="M0 0 H27 L19 5 L14 10 L10 14 L15 21 L19 27 H0 Z" fill="#4c5a52"/>
  <path d="M0 0 H7 L6 15 L3 27 H0 Z" fill="#1f3818"/>
  <path d="M9 12 L13 12 L23 27 H12 Z" fill="#a2a3a3"/>
  <path d="M0 22 H12 L14 27 H0 Z" fill="#7d7d78"/>
  <rect x="2" y="1.4" width="12" height="1.6" fill="#d9c39a"/>
  <path d="M26 3.5 H36 M23 11 H34 M17 15 H26 M23 19.5 H30 M22 24.4 H43" stroke="#d6eef6" stroke-width=".9"/>
  <rect x="33" y="5.2" width="4" height="1.2" fill="#c8e24a"/>
  <rect x="1" y="24" width="10" height="1.6" fill="#b04a3a" opacity=".7"/>
 </g>
 <!-- slide 3 -->
 <g transform="translate(36 292)">
  <rect width="48" height="27" fill="url(#g3)"/>
  <path d="M0 19 L48 9 V15 L0 26 Z" fill="#26281f"/>
  <path d="M0 23 L48 13 V17 L0 27 Z" fill="#6d684c" opacity=".8"/>
  <path d="M13 18 V12 H16 M21 16 V9 H24.5 M29 14 V6.5 H32.5 M37 12 V4 H41" stroke="#f4f2e6" stroke-width=".9"/>
  <rect x="5" y="15" width="4" height="1.8" fill="#e8e4d0"/>
  <rect x="2" y="1.6" width="12" height="1.5" fill="#e2d5c0"/>
  <rect x="1" y="1.4" width="1.4" height="2" fill="#d02828"/>
 </g>
 <!-- slide 4 -->
 <g transform="translate(36 341)">
  <rect width="48" height="27" fill="#07090d"/>
  <path d="M10 3 Q20 13.5 11 25" stroke="#1f5fae" stroke-width="2.2" opacity=".9"/>
  <path d="M9 2 Q16 13.5 9 26" stroke="#0d3566" stroke-width="2" opacity=".8"/>
  <path d="M16 7.6 H29 M18 10.6 H32 M19 14.4 H29 M19 18 H30 M18 21.6 H30" stroke="#77808c" stroke-width=".8"/>
  <rect x="4" y="11" width=".9" height="6" fill="#1fa2c8"/>
  <rect x="6.5" y="12" width="3" height="2" fill="#8a8f98"/>
  <rect x="6.5" y="15" width="3" height="1.2" fill="#6a7078"/>
  <rect x="38" y="23.4" width="8" height="1.8" fill="#158fd0"/>
  <path d="M34 27 L48 17 V27 Z" fill="#0e2238" opacity=".8"/>
 </g>
 <!-- slide 5 -->
 <g transform="translate(36 390)">
  <rect width="48" height="27" fill="#04040a"/>
  <path d="M0 0 H21 L12 27 H0 Z" fill="url(#g5)"/>
  <path d="M0 9 L13 2 L14 4 L0 12 Z" fill="#39404e"/>
  <path d="M18 0 L9 27" stroke="#596273" stroke-width="1"/>
  <rect x="22" y="4" width="8" height="1.7" fill="#f0f0f0"/>
  <path d="M23 8.8 H45 M20 13 H38 M22 16.6 H44 M21 20 H39" stroke="#6d7280" stroke-width=".8"/>
  <rect x="19" y="23.2" width="17" height="1.3" fill="#d8dcee"/>
  <rect x="1" y="24.4" width="8" height="1.2" fill="#b05048" opacity=".8"/>
 </g>
 <!-- slide 6 -->
 <g transform="translate(36 439)">
  <rect width="48" height="27" fill="url(#g6)"/>
  <rect x="11" y="9.4" width="34" height="13" fill="#5d9cb1"/>
  <path d="M21 10.8 H31 M21 13 H32 M21 15.6 H30 M21 18.4 H33 M21 20.6 H30" stroke="#e8f3f6" stroke-width=".9"/>
  <path d="M14 11 H17 M14 13.4 H17 M14 15.8 H17 M14 18.4 H17 M14 20.8 H17" stroke="#b8d6df" stroke-width=".8"/>
  <path d="M19.6 9.4 V22.4" stroke="#8bbccb" stroke-width=".6"/>
  <rect x="11" y="5.4" width="7" height="1.8" fill="#3a4a55"/>
  <path d="M5 9 V25 M8 14 V25 M5 17 H8 M5 20 H8 M5 23 H8" stroke="#4a545c" stroke-width=".8"/>
  <path d="M6.4 4.6 L7.6 5 L8 14 H6 Z" fill="#22282c"/>
  <rect x="37" y="24" width="8" height="1.2" fill="#c98d80" opacity=".8"/>
 </g>
 <!-- slide 7 -->
 <g transform="translate(36 488)">
  <rect width="48" height="27" fill="#1a7cc8"/>
  <path d="M26 0 H48 V27 H34 Q28 14 26 0 Z" fill="#156db8"/>
  <circle cx="27" cy="17" r="9" fill="#2a8ad2" opacity=".8"/>
  <rect x="5.4" y="0" width="7.6" height="27" fill="#f5f0f0"/>
  <path d="M14.4 9.4 H27 M14.4 12.4 H28 M14.4 15.4 H24 M14.4 18.4 H26 M14.4 21.4 H25" stroke="#c9e3f3" stroke-width="1"/>
  <path d="M9.4 9.4 H11 M9.4 12.4 H11 M9.4 15.4 H11 M9.4 18.4 H11 M9.4 21.4 H11" stroke="#9ccbe8" stroke-width=".8"/>
  <path d="M42 3 L45 7 L43 7.4 Z" fill="#e8f2fa"/>
  <rect x="38" y="24.4" width="5" height="1.3" fill="#8dc0e6"/>
 </g>
 <!-- slide 8 -->
 <g transform="translate(36 537)">
  <rect width="48" height="27" fill="url(#g8)"/>
  <rect x="0" y="23" width="48" height="4" fill="#c87a18"/>
  <rect x="0" y="22.4" width="48" height=".9" fill="#d8a030"/>
  <rect x="0" y="22" width="7" height=".9" fill="#58b830"/><rect x="15" y="22" width="4" height=".9" fill="#58b830"/>
  <rect x="22" y="19.6" width="3" height="3" fill="#2f9a3a"/><rect x="36" y="18.8" width="3" height="3.8" fill="#2f8a34"/>
  <rect x="12" y="16.2" width="7" height="1.4" fill="#9b4a18"/><rect x="16" y="14.6" width="1.2" height="1.6" fill="#f0c030"/>
  <rect x="4.4" y="16.6" width="1.6" height="2.4" fill="#f0c030"/><rect x="22.4" y="8.4" width="1.4" height="2.6" fill="#f0b428"/>
  <rect x="29.4" y="14.4" width="1.6" height="2.8" fill="#f0b428"/><rect x="40" y="12.8" width="3.6" height="2" fill="#c86820"/>
  <rect x="4.6" y="20.2" width="1.6" height="2.4" fill="#b04040"/>
  <g fill="#e9f6fd"><rect x="3" y="2.6" width="4.4" height="2"/><rect x="32" y="3" width="5" height="1.4"/><rect x="21" y="4.6" width="3" height="1.4"/><rect x="10" y="7.6" width="2" height="1.6"/><rect x="12" y="10.6" width="6" height="1.6"/><rect x="28" y="11.6" width="5" height="1.2"/><rect x="39" y="8.4" width="4" height="1.2"/><rect x="3" y="13.6" width="5" height="1.4"/><rect x="20" y="7" width="6" height=".8"/></g>
 </g>
 <!-- slide 9 -->
 <g transform="translate(36 586)">
  <rect width="48" height="27" fill="url(#g9)"/>
  <path d="M0 24 L20 16 L30 11 L43 6 L44 8 L30 15 L18 21 L0 27 Z" fill="#b9d6f2" opacity=".55"/>
  <path d="M1 21 L10 18.6 L18 20.4 L17 23 L3 24 Z" fill="#15427c" opacity=".9"/>
  <path d="M14 15.6 L26 12.6 L34 13.6 L28 16 Z" fill="#1c4f92" opacity=".85"/>
  <path d="M2 17 H7 M6 11 H11 M19 13.6 H24 M25 6.6 H29 M26 9 H31 M36 13.4 H42 M18 17.4 H23" stroke="#e6f0fb" stroke-width="1"/>
  <rect x="2.4" y="2" width="7" height="1.4" fill="#9cc0e8"/>
  <path d="M41 19 L44 21 L42 24" stroke="#dceaf8" stroke-width="1"/>
 </g>
 <!-- slide 10 -->
 <g transform="translate(36 635)">
  <rect width="48" height="27" fill="#f1eded"/>
  <path d="M0 0 H3.6 L1 5 H0 Z" fill="#2a3a4c"/><path d="M1.6 0 H4 L2.4 3 Z" fill="#2a8ac8"/>
  <rect x="4.6" y="2" width="19" height="1.5" fill="#3a8ac0"/>
  <rect x="8" y="6" width="5" height="4" fill="#27306a"/><rect x="8" y="8.6" width="5" height="1.4" fill="#c05a28"/>
  <rect x="22" y="7" width="5" height="4" fill="#3a3a4a"/><rect x="22" y="9.4" width="5" height="1.6" fill="#c06030"/>
  <rect x="35" y="7" width="5" height="3.4" fill="#18244a"/><rect x="35.6" y="8" width="4" height=".9" fill="#d8e0f0"/>
  <g fill="#2b92d6"><circle cx="10" cy="15.4" r="1.9"/><circle cx="17.4" cy="14.8" r="1.9"/><circle cx="24" cy="16.4" r="1.9"/><circle cx="31" cy="15.2" r="1.9"/><circle cx="38" cy="14.8" r="1.9"/></g>
  <path d="M7 17.4 L12 14.6 L24 16.4 L38 14.8 L46 10" stroke="#c8c8c8" stroke-width=".5"/>
  <rect x="15" y="20" width="5" height="4" fill="#2848a8"/><rect x="15" y="22.2" width="5" height="1.8" fill="#c04838"/>
  <rect x="30" y="21" width="5" height="3.4" fill="#3a6aa8"/><rect x="31" y="22" width="2.4" height="1" fill="#e8eef6"/>
  <rect x="37" y="24.4" width="7" height="1.1" fill="#e06a6a"/>
 </g>
 <!-- slide 11 -->
 <g transform="translate(36 684)">
  <rect width="48" height="27" fill="url(#pd)"/>
  <rect x="4" y="2.6" width="1.2" height="1.2" fill="#d02020"/><rect x="6" y="2.6" width="12" height="1.2" fill="#d83030"/>
  <path d="M2 5.2 H38" stroke="#bdbdbd" stroke-width=".5"/>
  <path d="M37 5.6 L48 1 V2.6 L39 5.8 Z" fill="#d02828"/><path d="M42 3 L48 1.2 V3.6 L44 4 Z" fill="#2a4aa8"/>
  <rect x="7" y="10.2" width="5.6" height="1" fill="#2a55b0"/><rect x="17.6" y="10.2" width="5.6" height="1" fill="#e02838"/>
  <rect x="35" y="15.2" width="5.6" height="1" fill="#2a55b0"/><rect x="13.6" y="18.2" width="5.6" height="1" fill="#2a55b0"/><rect x="22.6" y="18.2" width="5.6" height="1" fill="#e02838"/>
  <path d="M7 15.6 H12 L15 13.6 L19 16 L23 14 L28 17 L31 13" stroke="#bdbdbd" stroke-width=".5"/>
  <path d="M30 14.4 L36 8.6 L37.4 9.6 L33 15.6 Z" fill="#c9ccd2"/><circle cx="32.4" cy="13.6" r="1.3" fill="#e8c040"/><circle cx="32.4" cy="13.6" r=".6" fill="#3a5a9a"/>
  <rect x="37" y="24.2" width="7.6" height="1" fill="#ef8a8a"/>
 </g>
 <!-- slide 12 (selected) -->
 <g transform="translate(34.6 731.6)">
  <path d="M19 8.6 Q26 11 29 18.6" stroke="#4472c4" stroke-width="1.4"/>
  <path d="M26.6 17.6 L30.6 17 L30 21 Z" fill="#4472c4"/>
  <path d="M14.6 6.2 H21.6 M25.4 9.6 H36 M15 11.6 H23 M31 14.2 H36 M31 15.8 H35 M26.6 22 H36 M30 23.4 H33" stroke="#c4c4cc" stroke-width=".7"/>
 </g>
 <!-- animation stars -->
 <g fill="#f2f2f2">
  <path id="st" d="M15.2 650.2 L16.5 653.4 L19.9 653.6 L17.3 655.8 L18.2 659.2 L15.2 657.3 L12.3 659.2 L13.1 655.8 L10.5 653.6 L13.9 653.4 Z"/>
  <path d="M15.2 699.2 L16.5 702.4 L19.9 702.6 L17.3 704.8 L18.2 708.2 L15.2 706.3 L12.3 708.2 L13.1 704.8 L10.5 702.6 L13.9 702.4 Z"/>
 </g>
 <path d="M9.6 653 H11.4 M9.6 656.6 H11 M9.6 702 H11.4 M9.6 705.6 H11" stroke="#e6e6e6" stroke-width=".8"/>
 <!-- scroll arrows -->
 <path d="M109.8 234.6 H117.2 L113.5 230.4 Z" fill="#2e2e2e"/>
 <path d="M109.8 780.4 H117.2 L113.5 784.6 Z" fill="#2e2e2e"/>
</svg>
<!-- ===== slide editing area ===== -->
<div class="a" id="slide" style="left:241px;top:235px;width:960px;height:540px;background:#fff"></div>
<svg class="L" viewBox="0 0 1330 810" fill="none">
 <path d="M544.9 364.5 C550.6 365.1 556.2 365.5 562.1 366.3 C568.0 367.1 574.1 368.2 580.1 369.4 C586.1 370.6 592.2 371.9 598.2 373.5 C604.2 375.1 610.1 376.8 616.2 378.9 C622.3 380.9 629.2 383.5 634.8 385.8 C640.4 388.1 644.6 390.2 649.6 392.7 C654.6 395.2 659.5 397.8 664.5 400.6 C669.5 403.4 674.4 406.4 679.3 409.5 C684.2 412.6 689.0 415.9 694.1 419.4 C699.2 422.9 704.5 426.5 709.6 430.4 C714.7 434.3 719.5 438.3 724.5 442.7 C729.5 447.1 734.4 451.7 739.3 456.6 C744.2 461.5 749.1 466.2 754.1 471.9 C759.1 477.6 765.0 485.4 769.2 490.8 C773.4 496.2 776.0 499.7 779.4 504.2 C782.8 508.7 786.0 513.1 789.3 518.0 C792.6 522.9 795.9 528.2 799.2 533.4 C802.5 538.6 806.1 544.5 809.1 549.2 C812.1 554.0 814.6 557.7 817.4 561.9 L844.8 551.2 L832.2 634.4 L755.2 589.3 L781.9 577.4 C777.8 567.7 773.2 556.5 769.5 548.2 C765.8 539.9 762.9 533.5 759.6 527.4 C756.3 521.3 753.1 516.5 749.8 511.6 C746.5 506.8 743.3 503.2 739.9 498.3 C736.5 493.4 732.8 487.1 729.4 482.3 C726.0 477.5 722.8 473.4 719.5 469.4 C716.2 465.4 713.7 462.6 709.6 458.5 C705.5 454.4 699.8 449.1 694.8 444.7 C689.8 440.2 684.3 435.9 679.3 431.8 C674.2 427.7 669.5 423.6 664.5 419.9 C659.5 416.2 654.6 412.8 649.6 409.5 C644.6 406.2 640.4 403.2 634.8 400.1 C629.2 397.0 622.3 394.0 616.2 391.1 C610.1 388.2 604.2 385.6 598.2 383.0 C592.2 380.4 586.1 378.1 580.1 375.8 C574.1 373.5 568.0 371.3 562.1 369.4 C556.2 367.5 550.6 366.1 544.9 364.5 Z" fill="#4472c4"/>
 <g fill="#a3b6de" stroke="#dde5f4" stroke-width="1"><circle cx="665" cy="409.9" r="4.1"/><circle cx="724.5" cy="458.5" r="4.1"/><circle cx="769.5" cy="515.1" r="4.1"/></g>
 <!-- selection frame -->
 <rect x="353.5" y="295.5" width="751" height="401" stroke="#9a9a9a" stroke-width="1"/>
 <g fill="#fff" stroke="#909090" stroke-width="1.5">
  <circle cx="353.5" cy="295.5" r="4.6"/><circle cx="729" cy="295.5" r="4.6"/><circle cx="1104.5" cy="295.5" r="4.6"/>
  <circle cx="1104.5" cy="496" r="4.6"/>
  <circle cx="353.5" cy="696.5" r="4.6"/><circle cx="729" cy="696.5" r="4.6"/><circle cx="1104.5" cy="696.5" r="4.6"/>
 </g>
 <rect x="343.5" y="486.5" width="17" height="17" rx="1.5" fill="#fff" stroke="#cbcbcb" stroke-width="1"/>
 <path d="M353.7 490.6 L349.3 495 L353.7 499.5" stroke="#8c8c8c" stroke-width="1.6"/>
</svg>
<div class="st" style="left:516.00px;top:318px;width:144.41px;letter-spacing:-0.29px">2010年，创办了充电</div>
<div class="st" style="left:516.00px;top:336px;width:144.00px">股份有限公司企划部</div>
<div class="st" style="left:711.50px;top:391px;width:225.20px;letter-spacing:-0.15px">2012年，成为湖南省最具发展潜</div>
<div class="st" style="left:711.50px;top:409px;width:96.00px">力的新型企业</div>
<div class="st" style="left:517.09px;top:438px;width:177.91px;letter-spacing:-0.13px">2014年，连续两年被评为</div>
<div class="st" style="left:631.00px;top:457px;width:64.00px">先进企业</div>
<div class="st" style="left:804.00px;top:486px;width:129.20px;letter-spacing:-0.24px">2016年，受邀出席</div>
<div class="st" style="left:804.00px;top:504px;width:128.00px">国际互联网交流大</div>
<div class="st" style="left:804.00px;top:524px;width:16.00px">会</div>
<div class="st" style="left:732.94px;top:632px;width:210.11px;letter-spacing:-0.1px">2018年，成为欧洲运营商的合</div>
<div class="st" style="left:814.00px;top:650px;width:48.00px">作伙伴</div>
<!-- ===== right scrollbar ===== -->
<div class="a" style="left:1314px;top:225px;width:15px;height:508px;background:#5c5c5c;background-image:radial-gradient(circle,#687068 0.5px,transparent 0.8px),radial-gradient(circle,#687068 0.5px,transparent 0.8px);background-size:4px 8px;background-position:0 0,2px 4px"></div>
<div class="a" style="left:1314px;top:225px;width:15px;height:15px;background:#a2a2a2;border:1px solid #3c423c"></div>
<div class="a" style="left:1314px;top:678px;width:15px;height:40px;background:#9c9c9c;border:1px solid #3c423c;background-image:radial-gradient(circle,#b4b4b4 0.5px,transparent 0.8px),radial-gradient(circle,#b4b4b4 0.5px,transparent 0.8px);background-size:4px 8px;background-position:0 0,2px 4px"></div>
<div class="a" style="left:1314px;top:718px;width:15px;height:15px;background:#a2a2a2;border:1px solid #3c423c"></div>
<!-- ===== status bar ===== -->
<div class="a" id="status" style="left:0;top:790px;width:1330px;height:20px;background:#686868"></div>
<div class="a" style="left:127px;top:789px;width:1203px;height:1px;background:#9e9e9e"></div>
<div class="a" style="left:0;top:792px;width:1330px;height:1px;background:#505050"></div>
<div class="a" style="left:972px;top:793px;width:38px;height:17px;background:#454545"></div>
<div class="t" style="width:145.08px;text-align:justify;text-align-last:justify;left:6px;top:795px;color:#ececec;word-spacing:1.1px">幻灯片 第 12 张 , 共 12 张</div>
<div class="t" style="width:72.98px;text-align:justify;text-align-last:justify;left:168.5px;top:795px;color:#ececec;font-size:12.5px;letter-spacing:.25px">“Office 主题”</div>
<div class="t" style="width:24.00px;text-align:justify;text-align-last:justify;left:928px;top:795px;color:#f2f2f2">备注</div>
<div class="t" style="left:1261px;top:795px;color:#f2f2f2;font-size:12.5px">75%</div>
<svg class="L" viewBox="0 0 1330 810" fill="none">
 <!-- right scrollbar arrows -->
 <path d="M1317.8 234.6 H1325.2 L1321.5 230.4 Z" fill="#2e2e2e"/>
 <path d="M1317.8 723.4 H1325.2 L1321.5 727.6 Z" fill="#2e2e2e"/>
 <path d="M1318.3 741.6 H1324.7 L1321.5 738.4 Z M1318.3 746 H1324.7 L1321.5 742.8 Z" fill="#2a2a2a"/>
 <path d="M1318.3 756.6 H1324.7 L1321.5 759.8 Z M1318.3 761 H1324.7 L1321.5 764.2 Z" fill="#2a2a2a"/>
 <!-- spell-check book -->
 <path d="M267 797.6 V807.4 M261 797.2 H265 Q267 797.2 267 798.8 Q267 797.2 269 797.2 H273 V802 M261 797.2 V806.4 H265.6 Q267 806.4 267 807.8 Q267 806.4 268.6 806.4" stroke="#f0f0f0" stroke-width="1"/>
 <path d="M269.6 804.6 L271.4 806.6 L274.6 802.4" stroke="#f0f0f0" stroke-width="1.2"/>
 <!-- notes -->
 <path d="M913.6 802.5 H923.4 M913.6 805.4 H923.4 M913.6 808.2 H920.4" stroke="#f2f2f2" stroke-width="1.1"/>
 <path d="M916 800.4 H921 L918.5 797.4 Z" fill="#f2f2f2"/>
 <!-- normal view -->
 <rect x="984.4" y="796" width="13.8" height="12.8" fill="#f4f4f4"/>
 <rect x="988.6" y="797.8" width="7.6" height="5.2" fill="#454545"/>
 <rect x="986" y="797.8" width="1.4" height="9.2" fill="#454545" opacity=".0"/>
 <rect x="988.6" y="805" width="7.6" height="2" fill="#454545"/>
 <!-- sorter -->
 <g fill="#f4f4f4"><rect x="1022" y="796" width="6" height="5.6"/><rect x="1029.8" y="796" width="6" height="5.6"/><rect x="1022" y="803.2" width="6" height="5.6"/><rect x="1029.8" y="803.2" width="6" height="5.6"/></g>
 <!-- reading view -->
 <path d="M1060.5 796.6 H1065 Q1066.5 796.8 1066.5 798 Q1066.5 796.8 1068 796.6 H1072.5 V806.4 H1068 Q1066.5 806.6 1066.5 808 Q1066.5 806.6 1065 806.4 H1060.5 Z M1066.5 798 V808" stroke="#f4f4f4" stroke-width="1"/>
 <path d="M1062 799 H1065 M1062 801 H1065 M1062 803 H1065 M1062 805 H1065 M1068 799 H1071 M1068 801 H1071 M1068 803 H1071 M1068 805 H1071" stroke="#f4f4f4" stroke-width=".8"/>
 <!-- slideshow -->
 <path d="M1098 798.4 H1111" stroke="#f4f4f4" stroke-width="1.4"/>
 <path d="M1099.6 798.6 V804.4 H1109.4 V798.6 M1104.5 804.4 V807.6 M1101.4 808 H1107.6" stroke="#f4f4f4" stroke-width="1.1"/>
 <!-- zoom slider -->
 <path d="M1129 803.4 H1134.6" stroke="#f4f4f4" stroke-width="1.6"/>
 <path d="M1140 803.4 H1238.5" stroke="#f4f4f4" stroke-width="1.2"/>
 <rect x="1174" y="797" width="5.2" height="11" fill="#fbfbfb"/>
 <path d="M1189.5 800.6 V806.2" stroke="#f4f4f4" stroke-width="1"/>
 <path d="M1242.6 803.4 H1249.4 M1246 800 V806.8" stroke="#f4f4f4" stroke-width="1.5"/>
 <!-- fit to window -->
 <rect x="1300.5" y="796.5" width="12" height="12" stroke="#f4f4f4" stroke-width="1.1"/>
 <path d="M1306.5 798.4 V800.6 M1306.5 804.4 V806.6 M1302.4 802.5 H1304.6 M1308.4 802.5 H1310.6" stroke="#f4f4f4" stroke-width="1"/>
 <path d="M1305.3 799.6 L1306.5 798.2 L1307.7 799.6 M1305.3 805.4 L1306.5 806.8 L1307.7 805.4 M1303.6 801.3 L1302.2 802.5 L1303.6 803.7 M1309.4 801.3 L1310.8 802.5 L1309.4 803.7" stroke="#f4f4f4" stroke-width=".9"/>
</svg>
</div>
</body>
</html>
